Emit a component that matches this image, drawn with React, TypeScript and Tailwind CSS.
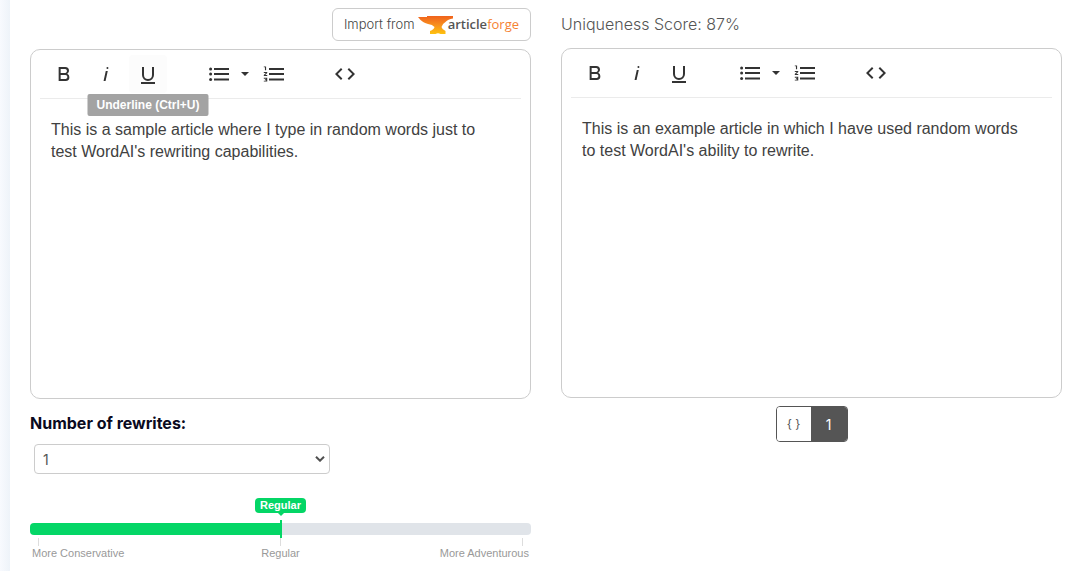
import type { ReactNode } from "react";

function Icon({ children }: { children: ReactNode }) {
  return (
    <svg viewBox="0 0 24 24" className="size-6 shrink-0" fill="#333333" aria-hidden="true">
      {children}
    </svg>
  );
}

const paths = {
  bold: "M15.25,11.8h0A3.68,3.68,0,0,0,17,9a3.93,3.93,0,0,0-3.86-4H6.65V19h7a3.74,3.74,0,0,0,3.7-3.78V15.1A3.64,3.64,0,0,0,15.25,11.8ZM8.65,7h4.2a2.09,2.09,0,0,1,2,1.3,2.09,2.09,0,0,1-1.37,2.61,2.23,2.23,0,0,1-.63.09H8.65Zm4.6,10H8.65V13h4.6a2.09,2.09,0,0,1,2,1.3,2.09,2.09,0,0,1-1.37,2.61A2.23,2.23,0,0,1,13.25,17Z",
  italic: "M11.76,9h2l-2.2,10h-2Zm1.68-4a1,1,0,1,0,1,1,1,1,0,0,0-1-1Z",
  underline: "M19,20v2H5V20ZM16,5v8a4,4,0,0,1-8,0V5H6v8a6,6,0,0,0,12,0V5Z",
  bars: "M7,6H22V8H7ZM7,11H22V13H7ZM7,16.5H22V18.5H7Z",
  code: "M9.4,16.6 4.8,12 9.4,7.4 8,6 2,12 8,18ZM14.6,16.6 19.2,12 14.6,7.4 16,6 22,12 16,18Z",
};

const tool = "flex h-[38px] w-[38px] items-center justify-center rounded-sm hover:bg-gray-50";

function Toolbar({ tooltip = false }: { tooltip?: boolean }) {
  return (
    <div role="toolbar" aria-label="Formatting" className="mx-[9px] flex h-[49px] items-center border-b border-[#ebebeb] pl-[5px]">
      <button type="button" aria-label="Bold" className={tool}>
        <Icon><path d={paths.bold} /></Icon>
      </button>
      <button type="button" aria-label="Italic" className={`${tool} ml-1`}>
        <Icon><path d={paths.italic} /></Icon>
      </button>
      <div className="relative ml-1">
        <button type="button" aria-label="Underline" className={tooltip ? `${tool} bg-[#fcfcfc]` : tool}>
          <Icon><path d={paths.underline} /></Icon>
        </button>
        {tooltip && (
          <div role="tooltip" className="absolute top-[39px] left-1/2 z-10 flex h-[22px] -translate-x-1/2 items-center rounded-xs bg-[#a3a3a3] px-[9px] text-[12px] font-bold whitespace-nowrap text-white">
            Underline (Ctrl+U)
          </div>
        )}
      </div>
      <button type="button" aria-label="Unordered list" className={`${tool} ml-[33px]`}>
        <Icon>
          <circle cx="3.6" cy="7" r="1.5" />
          <circle cx="3.6" cy="12" r="1.5" />
          <circle cx="3.6" cy="17.5" r="1.5" />
          <path d={paths.bars} />
        </Icon>
      </button>
      <button type="button" aria-label="List styles" className="flex h-[38px] w-[14px] items-center justify-center">
        <svg viewBox="0 0 8 4" className="h-1 w-2" fill="#333333" aria-hidden="true">
          <path d="M0 0h8L4 4z" />
        </svg>
      </button>
      <button type="button" aria-label="Ordered list" className={`${tool} ml-[3px]`}>
        <Icon>
          <path d={paths.bars} />
          <path
            transform="translate(-.5 .6) scale(1.15 .95)"
            d="M2 17h2v.5H3v1h1v.5H2v1h3v-4H2v1zm1-9h1V4H2v1h1v3zm-1 3h1.800L2 13.100v.9h3v-1H3.200L5 10.900V10H2v1z"
          />
        </Icon>
      </button>
      <button type="button" aria-label="Code view" className={`${tool} ml-[33px]`}>
        <Icon><path d={paths.code} /></Icon>
      </button>
    </div>
  );
}

function Editor({ label, value, tooltip }: { label: string; value: string; tooltip?: boolean }) {
  return (
    <section className="flex h-[350px] flex-col rounded-[10px] border border-[#cccccc] bg-white">
      <Toolbar tooltip={tooltip} />
      <textarea
        aria-label={label}
        defaultValue={value}
        spellCheck={false}
        className="block w-full flex-1 resize-none bg-transparent pt-5 pr-9 pl-5 text-[16px] leading-[22px] text-[#414141] outline-none"
      />
    </section>
  );
}

function ForgeLogo() {
  return (
    <span className="flex items-center">
      <svg viewBox="0 0 36 20" className="h-5 w-9" aria-hidden="true">
        <defs>
          <linearGradient id="anvil" x1="0" y1="0" x2="0" y2="1">
            <stop offset="0" stopColor="#f0621c" />
            <stop offset="0.45" stopColor="#f78b1e" />
            <stop offset="1" stopColor="#fec20e" />
          </linearGradient>
        </defs>
        <path fill="url(#anvil)" d="M0 2H9V1H35V3.500Q30 4 27.500 7Q24 9 23.500 12Q24 14.500 27.500 16V19H22.500Q20 17.500 17.500 19H12V16Q16 14.500 16.500 12Q14.500 9.500 10 9Q4 7.500 0 2Z" />
      </svg>
      <span className="-ml-[6px] font-['Open_Sans',sans-serif] text-[13px] font-semibold text-[#555555]">
        article<span className="font-normal text-[#f58233]">forge</span>
      </span>
    </span>
  );
}

export default function App() {
  return (
    <div className="flex min-h-screen bg-white font-['Liberation_Sans',Arial,sans-serif]">
      <div className="w-[10px] shrink-0 bg-linear-to-r from-[#f8fafe] to-[#eef3f9]" />
      <main className="grid flex-1 grid-cols-2 gap-[30px] pr-4 pl-5">
        <div className="min-w-0 pt-2">
          <div className="flex justify-end">
            <button type="button" className="flex h-[33px] items-center gap-[3px] rounded-md border border-[#cccccc] px-[11px] font-['Inter',sans-serif] text-[13px] font-light text-[#444444]">
              Import from
              <ForgeLogo />
            </button>
          </div>
          <div className="mt-2">
            <Editor
              tooltip
              label="Original article"
              value="This is a sample article where I type in random words just to test WordAI's rewriting capabilities."
            />
          </div>
          <label htmlFor="rewrites" className="mt-3 block font-['Inter',sans-serif] text-[16px] leading-6 font-bold text-[#0a0a1e]">
            Number of rewrites:
          </label>
          <div className="relative mt-[9px] ml-1 w-[296px]">
            <select id="rewrites" defaultValue="1" className="block h-[30px] w-full appearance-none rounded-sm border border-[#cccccc] bg-white px-2 font-['Inter',sans-serif] text-[14px] text-[#555555]">
              <option>1</option>
              <option>2</option>
              <option>3</option>
            </select>
            <svg viewBox="0 0 10 6" className="pointer-events-none absolute top-3 right-[5px] h-[6px] w-[10px]" fill="none" stroke="#505050" strokeWidth="2" aria-hidden="true">
              <path d="M1 .7 5 4.700 9 .7" />
            </svg>
          </div>
          <div className="mt-6 flex flex-col items-center">
            <output htmlFor="creativity" className="flex h-[15px] items-center rounded-sm bg-[#04d666] px-[5px] text-[11px] font-bold text-white">
              Regular
            </output>
            <svg viewBox="0 0 6 3" className="h-[3px] w-[6px]" fill="#04d666" aria-hidden="true">
              <path d="M0 0h6L3 3z" />
            </svg>
          </div>
          <input
            id="creativity"
            type="range"
            min="0"
            max="2"
            defaultValue="1"
            aria-label="Rewriting creativity"
            className="mt-1 block h-[18px] w-full appearance-none bg-transparent [&::-webkit-slider-runnable-track]:h-3 [&::-webkit-slider-runnable-track]:rounded-sm [&::-webkit-slider-runnable-track]:bg-[linear-gradient(to_right,#04d666_50%,#e0e4e9_50%)] [&::-webkit-slider-thumb]:-mt-[3px] [&::-webkit-slider-thumb]:h-[18px] [&::-webkit-slider-thumb]:w-[2px] [&::-webkit-slider-thumb]:appearance-none [&::-webkit-slider-thumb]:bg-[#04d666]"
          />
          <div className="flex justify-between px-2" aria-hidden="true">
            <span className="h-2 w-px bg-[#dddddd]" />
            <span className="h-2 w-px bg-[#dddddd]" />
            <span className="h-2 w-px bg-[#dddddd]" />
          </div>
          <div className="grid grid-cols-3 px-[2px] pt-px text-[11px] leading-3 text-[#999999]">
            <span>More Conservative</span>
            <span className="text-center">Regular</span>
            <span className="text-right">More Adventurous</span>
          </div>
        </div>
        <div className="min-w-0">
          <p className="flex h-12 items-center font-['Inter',sans-serif] text-[16px] font-light text-[#555555]">
            Uniqueness Score: 87%
          </p>
          <Editor
            label="Rewritten article"
            value="This is an example article in which I have used random words to test WordAI's ability to rewrite."
          />
          <div className="mt-2 flex justify-center">
            <div className="flex h-9 overflow-hidden rounded-sm border border-[#555555] font-['Inter',sans-serif] text-[12px]">
              <button type="button" aria-label="Spintax" className="w-[34px] bg-white text-[#555555]">{"{ }"}</button>
              <button type="button" aria-label="Rewrite 1" className="w-9 bg-[#555555] text-[14px] text-white">1</button>
            </div>
          </div>
        </div>
      </main>
    </div>
  );
}
